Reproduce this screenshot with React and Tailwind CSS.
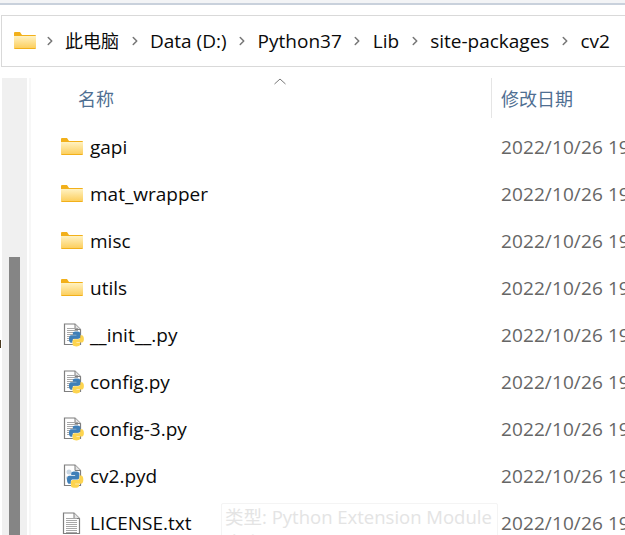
import { ChevronRight } from 'lucide-react'

const FILES = [
  { name: 'gapi', icon: 'folder' },
  { name: 'mat_wrapper', icon: 'folder' },
  { name: 'misc', icon: 'folder' },
  { name: 'utils', icon: 'folder' },
  { name: '__init__.py', icon: 'py' },
  { name: 'config.py', icon: 'py' },
  { name: 'config-3.py', icon: 'py' },
  { name: 'cv2.pyd', icon: 'pyd' },
  { name: 'LICENSE.txt', icon: 'txt' },
]

const CRUMBS = ['此电脑', 'Data (D:)', 'Python37', 'Lib', 'site-packages', 'cv2']

const SNAKE = 'M11.8 0 C6 0 6.2 2.5 6.2 2.5 V5.3 H12 V6.1 H4 C4 6.1 0 5.6 0 12 C0 18.3 3.5 18.1 3.5 18.1 H5.6 V15.1 C5.6 15.1 5.5 11.6 9 11.6 H15 C15 11.6 18.2 11.6 18.2 8.4 V3.1 C18.2 3.1 18.7 0 11.8 0 Z'

function FolderIcon({ id }) {
  return (
    <svg width="22" height="18" viewBox="0 0 22 18" className="shrink-0">
      <defs>
        <linearGradient id={id} x1="0" y1="0" x2="0" y2="1">
          <stop offset="0" stopColor="#fff2c2" />
          <stop offset="1" stopColor="#fccf5f" />
        </linearGradient>
      </defs>
      <path d="M0 1 Q0 0 1 0 H6 L8 3 H21 Q22 3 22 4 V16 Q22 17 21 17 H1 Q0 17 0 16 Z" fill="#f2b01a" />
      <rect x="0" y="4" width="22" height="12" fill={`url(#${id})`} />
    </svg>
  )
}

function Snake({ transform }) {
  return (
    <g transform={transform}>
      <path d={SNAKE} fill="#3f7fb8" />
      <path d={SNAKE} fill="#fdd44f" transform="rotate(180 12 12)" />
    </g>
  )
}

function PageShape({ lines }) {
  return (
    <g transform="translate(0 1)">
      <path d="M1.5 1 H12 L17.5 6.5 V21.5 H1.5 Z" fill="#fff" stroke="#7f7f7f" strokeWidth="1.2" />
      <path d="M12 1 V6.5 H17.5" fill="#e4e4e4" stroke="#7f7f7f" strokeWidth="1" />
      {lines.map((y) => (
        <rect key={y} x="4" y={y} width="11" height="1" fill="#a8a8a8" />
      ))}
    </g>
  )
}

function FileIcon({ type }) {
  if (type === 'txt') {
    return (
      <svg width="19" height="24" viewBox="0 0 19 24" className="shrink-0 ml-[2px]">
        <PageShape lines={[6, 8, 10, 12, 14, 16, 18, 20]} />
      </svg>
    )
  }
  return (
    <svg width="23" height="26" viewBox="0 0 23 26" className="shrink-0 ml-[3px]">
      {type === 'py' ? (
        <>
          <PageShape lines={[5, 7, 9, 11, 13, 15, 17]} />
          <Snake transform="translate(6 9.5) scale(0.62)" />
        </>
      ) : (
        <>
          <PageShape lines={[]} />
          <circle cx="6" cy="9" r="2.5" fill="#c9d6e2" />
          <circle cx="5" cy="15" r="2" fill="#c9d6e2" />
          <Snake transform="translate(4 8.5) scale(0.68)" />
        </>
      )}
    </svg>
  )
}

function Row({ file, index }) {
  return (
    <div className="flex h-[47px] items-center">
      <div className="flex w-[441px] shrink-0 items-center">
        <div className="flex w-[30px] shrink-0 items-center">
          {file.icon === 'folder' ? (
            <div className="ml-px">
              <FolderIcon id={`folder-${index}`} />
            </div>
          ) : (
            <FileIcon type={file.icon} />
          )}
        </div>
        <span className="text-[19px] leading-[26px] text-[#0a0a0a]">{file.name}</span>
      </div>
      <span className="text-[19px] leading-[26px] tracking-[0.1px] whitespace-nowrap text-[#666666]">2022/10/26 19:32</span>
    </div>
  )
}

export default function App() {
  return (
    <div
      className="relative h-[535px] w-[625px] overflow-hidden bg-white"
      style={{ fontFamily: '"Open Sans", "Noto Sans CJK SC", sans-serif' }}
    >
      <div className="h-[5px] border-b-[2px] border-[#c9d1dc] bg-[#f3f4f6]" />

      <div className="mt-[10px] ml-[1px] flex h-[52px] items-center border border-r-0 border-[#d9d9d9] pl-[12px]">
        <FolderIcon id="folder-crumb" />
        <div className="-ml-[2px] flex items-center">
          {CRUMBS.map((crumb, i) => (
            <div key={crumb} className="flex items-center">
              <ChevronRight size={14} strokeWidth={2.6} className="mx-[8.5px] text-[#777777]" />
              <span className={i === 0 ? 'text-[18px] leading-[26px] whitespace-nowrap text-[#0a0a0a]' : 'text-[19px] leading-[26px] whitespace-nowrap text-[#0a0a0a]'}>
                {crumb}
              </span>
            </div>
          ))}
        </div>
      </div>

      <div className="mt-[11px] flex h-[457px]">
        <div className="ml-[2px] flex w-[25px] shrink-0 flex-col bg-[#f0f0f0] pt-[179px] pl-[7px]">
          <div className="h-full w-[11px] bg-[#858585]" />
        </div>
        <div className="ml-[2px] w-[2px] shrink-0 bg-[#f7f7f7]" />

        <div className="min-w-0 flex-1 pl-[29px]">
          <div className="relative flex h-[39px] items-center">
            <span className="mt-[3px] ml-[18px] w-[413px] shrink-0 text-[18px] text-[#4f6f92]">名称</span>
            <div className="h-[40px] w-px shrink-0 bg-[#e5e5e5]" />
            <span className="mt-[3px] ml-[9px] text-[18px] whitespace-nowrap text-[#4f6f92]">修改日期</span>
            <svg width="12" height="7" viewBox="0 0 12 7" className="absolute top-0 left-[214px]">
              <path d="M0.5 6 L6 1 L11.5 6" fill="none" stroke="#777777" strokeWidth="1" />
            </svg>
          </div>
          <div className="mt-[6px]">
            {FILES.map((file, index) => (
              <Row key={file.name} file={file} index={index} />
            ))}
          </div>
        </div>
      </div>

      <div className="absolute top-[340px] left-0 h-[8px] w-px bg-[#4a3a20]" />

      {/* fading tooltip over the last row */}
      <div className="absolute top-[503px] left-[221px] h-[40px] w-[277px] rounded-[2px] border border-[#f4f4f4] bg-white px-[3px] text-[18.5px] leading-[26px] whitespace-nowrap text-[#e4e4e4]">
        <div>类型: Python Extension Module</div>
        <div>大小: 67.0 MB</div>
      </div>
    </div>
  )
}
